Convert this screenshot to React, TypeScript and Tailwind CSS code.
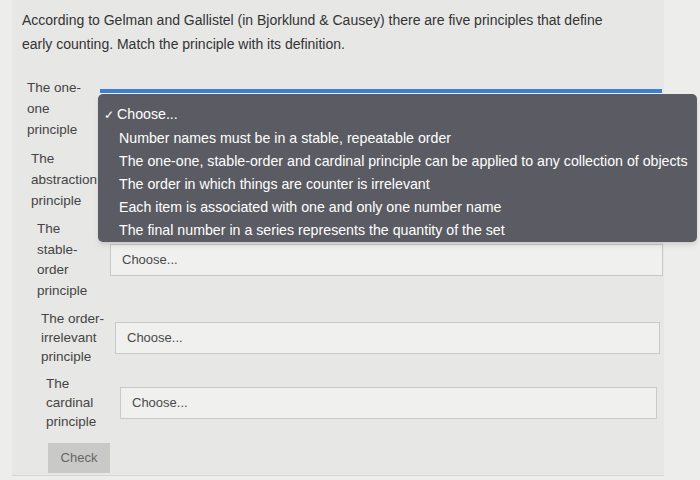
import React from 'react';

const font = { fontFamily: '"Liberation Sans", Arial, sans-serif' };

const rows = [
  { lines: ['The one-', 'one', 'principle'], pl: 'pl-[15px]', lead: 'leading-[21px]', sel: 'ml-[5px] mr-[2px]', open: true },
  { lines: ['The', 'abstraction', 'principle'], pl: 'pl-[19px]', lead: 'leading-[21px]', sel: '', hidden: true },
  { lines: ['The', 'stable-', 'order', 'principle'], pl: 'pl-[25px]', lead: 'leading-[20.5px]', sel: 'ml-[5px] mr-[1px]' },
  { lines: ['The order-', 'irrelevant', 'principle'], pl: 'pl-[29px]', lead: 'leading-[19px]', sel: 'ml-[6px] mr-[4px]' },
  { lines: ['The', 'cardinal', 'principle'], pl: 'pl-[34px]', lead: 'leading-[19px]', sel: 'ml-[6px] mr-[7px]' },
];

const options = [
  'Number names must be in a stable, repeatable order',
  'The one-one, stable-order and cardinal principle can be applied to any collection of objects',
  'The order in which things are counter is irrelevant',
  'Each item is associated with one and only one number name',
  'The final number in a series represents the quantity of the set',
];

export default function App() {
  return (
    <div className="relative w-[700px] h-[480px] overflow-hidden bg-[#ededec] text-[#3c3c3c]" style={font}>
      <div className="ml-[12px] mr-[36px] h-[476px] bg-[#e7e7e6] border-b border-[#d6d6d6]">
        <p className="pl-[10px] pt-[8px] text-[14px] leading-[24px] text-[#333]">
          According to Gelman and Gallistel (in Bjorklund &amp; Causey) there are five principles that define
          <br />
          early counting. Match the principle with its definition.
        </p>

        <div className="mt-[21px] flex flex-col gap-[8px]">
          {rows.map((r, i) => (
            <div key={i} className={`flex items-center ${r.pl}`}>
              <div className={`w-[68px] shrink-0 text-[13.5px] ${r.lead} text-[#444]`}>
                {r.lines.map((l, j) => (
                  <div key={j}>{l}</div>
                ))}
              </div>
              {r.open ? (
                <div className={`flex-1 h-[32px] ${r.sel} -mt-[8px] border-t-[4px] border-[#3d7fd6] bg-[#efefee]`} />
              ) : r.hidden ? (
                <div className="flex-1" />
              ) : (
                <div
                  className={`flex-1 h-[32px] ${r.sel} flex items-center pl-[11px] bg-[#f0f0ef] border border-[#c9c9c8] text-[13px] text-[#4a4a4a]`}
                >
                  Choose...
                </div>
              )}
            </div>
          ))}
        </div>

        <button className="mt-[12px] ml-[36px] w-[62px] h-[30px] bg-[#c9c9c8] text-[13px] text-[#666]">
          Check
        </button>
      </div>

      <div className="absolute left-[98px] top-[94px] w-[599px] h-[148px] rounded-[5px] bg-[#5b5c63] text-white text-[14.2px] leading-[23px] pt-[9px] shadow-md">
        <div className="pl-[6px]">
          <span className="inline-block w-[13px] text-[12px]">✓</span>Choose...
        </div>
        {options.map((o, i) => (
          <div key={i} className="pl-[21px] whitespace-nowrap">
            {o}
          </div>
        ))}
      </div>
    </div>
  );
}
